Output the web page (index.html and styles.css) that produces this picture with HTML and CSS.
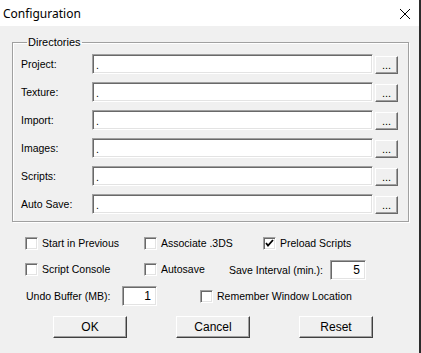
FILE: index.html
```html
<!DOCTYPE html>
<html lang="en">
<head>
    <meta charset="UTF-8">
    <title>Configuration</title>
    <link rel="stylesheet" href="styles.css">
</head>
<body>
    <div class="window">
        <div class="titlebar">
            <span class="title">Configuration</span>
            <svg class="close" width="12" height="12" viewBox="0 0 12 12">
                <path d="M1 1 L11 11 M11 1 L1 11" stroke="#000" stroke-width="1" fill="none"/>
            </svg>
        </div>

        <div class="content">
            <fieldset class="group">
                <legend>Directories</legend>
                <div class="dir-row"><span class="label">Project:</span><div class="field">.</div><button class="browse">...</button></div>
                <div class="dir-row"><span class="label">Texture:</span><div class="field">.</div><button class="browse">...</button></div>
                <div class="dir-row"><span class="label">Import:</span><div class="field">.</div><button class="browse">...</button></div>
                <div class="dir-row"><span class="label">Images:</span><div class="field">.</div><button class="browse">...</button></div>
                <div class="dir-row"><span class="label">Scripts:</span><div class="field">.</div><button class="browse">...</button></div>
                <div class="dir-row"><span class="label">Auto Save:</span><div class="field">.</div><button class="browse">...</button></div>
            </fieldset>

            <div class="options">
                <div class="opt-row">
                    <label class="check col1"><span class="box"></span>Start in Previous</label>
                    <label class="check col2"><span class="box"></span>Associate .3DS</label>
                    <label class="check"><span class="box"><svg width="9" height="9" viewBox="0 0 9 9"><path d="M1 4 L3 6.5 L8 1" stroke="#000" stroke-width="1.8" fill="none"/></svg></span>Preload Scripts</label>
                </div>
                <div class="opt-row">
                    <label class="check col1"><span class="box"></span>Script Console</label>
                    <label class="check col2b"><span class="box"></span>Autosave</label>
                    <span class="num-label interval">Save Interval (min.):</span>
                    <div class="num">5</div>
                </div>
                <div class="opt-row row3">
                    <span class="num-label undo">Undo Buffer (MB):</span>
                    <div class="num small">1</div>
                    <label class="check remember"><span class="box"></span>Remember Window Location</label>
                </div>
            </div>

            <div class="buttons">
                <button class="btn">OK</button>
                <button class="btn">Cancel</button>
                <button class="btn">Reset</button>
            </div>
        </div>
    </div>
</body>
</html>
```

FILE: styles.css
```css
* {
    margin: 0;
    padding: 0;
    box-sizing: border-box;
}

body {
    font-family: 'Liberation Sans', Arial, sans-serif;
    font-size: 10.5px;
    color: #000;
    background-color: #f0f0f0;
}

.window {
    width: 421px;
    height: 353px;
    border-right: 2px solid #2b2b2b;
    background-color: #f0f0f0;
    overflow: hidden;
}

.titlebar {
    height: 26px;
    background-color: white;
    display: flex;
    align-items: center;
    justify-content: space-between;
    padding-left: 3px;
    padding-right: 8px;
}

.title {
    font-family: 'Noto Sans', 'Open Sans', sans-serif;
    font-size: 12px;
}

.close {
    display: block;
    margin-top: 1px;
}

.content {
    padding-top: 10px;
}

.group {
    margin-left: 12px;
    width: 397px;
    border: 1px solid #a0a0a0;
    box-shadow: 1px 1px 0 #fff, inset 1px 1px 0 #fff;
    padding: 5px 9px 7px 8px;
}

.group legend {
    margin-left: 6px;
    padding: 0 1px;
    line-height: 13px;
    font-size: 11px;
}

.dir-row {
    display: flex;
    align-items: center;
    height: 20px;
    margin-bottom: 8px;
}

.dir-row:last-child {
    margin-bottom: 0;
}

.label {
    width: 71px;
}

.field {
    width: 281px;
    height: 20px;
    background-color: white;
    border: 1px solid;
    border-color: #a0a0a0 #fff #fff #a0a0a0;
    box-shadow: inset 1px 1px 0 #696969, inset -1px -1px 0 #e3e3e3;
    padding: 4px 0 0 3px;
    line-height: 12px;
}

.browse {
    margin-left: 2px;
    margin-top: 1px;
    width: 23px;
    height: 18px;
    font-family: 'Liberation Sans', Arial, sans-serif;
    font-size: 11px;
    background-color: #f0f0f0;
    border: 1px solid;
    border-color: #fff #696969 #696969 #fff;
    box-shadow: inset -1px -1px 0 #a0a0a0;
    line-height: 10px;
}

.options {
    padding-top: 15px;
}

.opt-row {
    display: flex;
    align-items: center;
    height: 13px;
    margin-bottom: 13px;
}

.row3 {
    height: 20px;
    margin-top: -3px;
    margin-bottom: 0;
}

.check {
    display: flex;
    align-items: center;
    line-height: 13px;
}

.col1 {
    margin-left: 25px;
    width: 119px;
}

.col2 {
    width: 119px;
}

.col2b {
    width: 85px;
}

.box {
    width: 13px;
    height: 13px;
    background-color: white;
    border: 1px solid;
    border-color: #a0a0a0 #fff #fff #a0a0a0;
    box-shadow: inset 1px 1px 0 #696969, inset -1px -1px 0 #e3e3e3;
    margin-right: 4px;
    display: flex;
    align-items: center;
    justify-content: center;
}

.box svg {
    display: block;
}

.interval {
    width: 101px;
}

.undo {
    margin-left: 26px;
    width: 96px;
}

.num {
    width: 36px;
    height: 20px;
    background-color: white;
    border: 1px solid;
    border-color: #a0a0a0 #fff #fff #a0a0a0;
    box-shadow: inset 1px 1px 0 #696969, inset -1px -1px 0 #e3e3e3;
    text-align: right;
    padding: 3px 5px 0 0;
    font-size: 12px;
    line-height: 13px;
}

.small {
    width: 35px;
}

.remember {
    margin-left: 43px;
}

.buttons {
    display: flex;
    gap: 49px;
    padding-left: 53px;
    margin-top: 10px;
}

.btn {
    width: 74px;
    height: 22px;
    font-family: 'Liberation Sans', Arial, sans-serif;
    font-size: 12px;
    background-color: #f0f0f0;
    border: 1px solid;
    border-color: #fff #404040 #404040 #fff;
    box-shadow: inset -1px -1px 0 #a0a0a0;
}
```
